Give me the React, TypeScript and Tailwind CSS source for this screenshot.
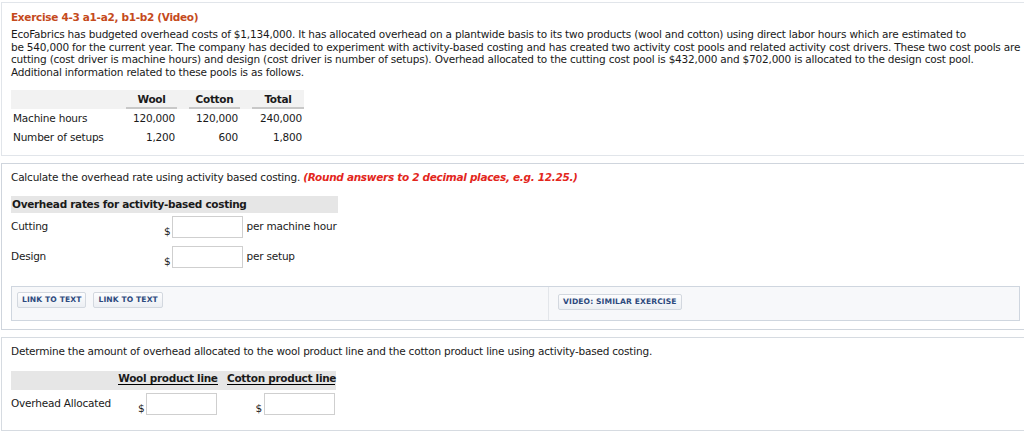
const font = { fontFamily: '"DejaVu Sans", Verdana, sans-serif' };

function LinkButton({ label }: { label: string }) {
  return (
    <button className="rounded-[2px] border border-[#d3d8df] bg-gradient-to-b from-[#fdfdfe] to-[#eceff3] px-[4px] py-[2px] text-[7.6px] font-bold leading-[10px] tracking-[0.1px] text-[#2d4a7e]">
      {label}
    </button>
  );
}

function MoneyInput() {
  return (
    <div className="flex items-end">
      <span className="mr-[2px] pb-[1px] leading-[12px]">$</span>
      <input className="h-[22px] w-[71px] border border-[#cfcfcf] bg-white outline-none" />
    </div>
  );
}

const cell = "pr-[2px] text-right";

export default function App() {
  return (
    <div className="h-[437px] w-[1024px] overflow-hidden bg-white text-[10.5px] tracking-[-0.2px] text-[#1a1a1a]" style={font}>
      {/* problem statement */}
      <div className="ml-[1px] mt-[2px] border-b border-l border-t border-[#e1e5ea] pb-[11px] pl-[9px] pt-[7px]">
        <div className="font-bold leading-[14px] tracking-[-0.3px] text-[#c54a1c]">Exercise 4-3 a1-a2, b1-b2 (Video)</div>
        <p className="mt-[4px] whitespace-nowrap leading-[12.5px]">
          EcoFabrics has budgeted overhead costs of $1,134,000. It has allocated overhead on a plantwide basis to its two products (wool and cotton) using direct labor hours which are estimated to
          <br />
          be 540,000 for the current year. The company has decided to experiment with activity-based costing and has created two activity cost pools and related activity cost drivers. These two cost pools are
          <br />
          cutting (cost driver is machine hours) and design (cost driver is number of setups). Overhead allocated to the cutting cost pool is $432,000 and $702,000 is allocated to the design cost pool.
          <br />
          Additional information related to these pools is as follows.
        </p>
        <div className="mt-[12px] grid w-[293px] grid-cols-[115px_51px_63px_64px] leading-[13px]">
          <div className="bg-[#f2f2f2]"></div>
          <div className="bg-[#f2f2f2] pt-[3px] font-bold tracking-[-0.3px]">
            <div className="border-b-2 border-[#c8c8c8] pb-[1px] text-center">Wool</div>
          </div>
          <div className="bg-[#f2f2f2] pl-[12px] pt-[3px] font-bold tracking-[-0.3px]">
            <div className="border-b-2 border-[#c8c8c8] pb-[1px] text-center">Cotton</div>
          </div>
          <div className="bg-[#f2f2f2] pl-[12px] pt-[3px] font-bold tracking-[-0.3px]">
            <div className="border-b-2 border-[#c8c8c8] pb-[1px] text-center">Total</div>
          </div>

          <div className="pl-[2px] pt-[3px]">Machine hours</div>
          <div className={`${cell} pt-[3px]`}>120,000</div>
          <div className={`${cell} pt-[3px]`}>120,000</div>
          <div className={`${cell} pt-[3px]`}>240,000</div>

          <div className="whitespace-nowrap pl-[2px] pt-[6px]">Number of setups</div>
          <div className={`${cell} pt-[6px]`}>1,200</div>
          <div className={`${cell} pt-[6px]`}>600</div>
          <div className={`${cell} pt-[6px]`}>1,800</div>
        </div>
      </div>

      {/* part a */}
      <div className="ml-[1px] mt-[7px] border-b border-l border-t border-[#cfd5dd] pb-[8px] pl-[9px] pt-[7px]">
        <div className="leading-[13px]">
          Calculate the overhead rate using activity based costing.{" "}
          <span className="font-bold italic tracking-[-0.3px] text-[#e3261c]">(Round answers to 2 decimal places, e.g. 12.25.)</span>
        </div>
        <div className="mt-[12px] w-[327px] bg-[#e6e6e6] px-[1px] py-[2px] font-bold leading-[13px] tracking-[-0.3px]">Overhead rates for activity-based costing</div>
        <div className="mt-[3px] flex items-start">
          <div className="w-[153px] pt-[4px] leading-[13px]">Cutting</div>
          <MoneyInput />
          <div className="pl-[3px] pt-[4px] leading-[13px]">per machine hour</div>
        </div>
        <div className="mt-[8px] flex items-start">
          <div className="w-[153px] pt-[4px] leading-[13px]">Design</div>
          <MoneyInput />
          <div className="pl-[3px] pt-[4px] leading-[13px]">per setup</div>
        </div>
        <div className="mr-[4px] mt-[18px] flex h-[35px] border border-[#cfd6df] bg-[#f7f8fa]">
          <div className="flex w-[537px] items-start gap-[7px] border-r border-[#e3e6ea] pl-[5px] pt-[5px]">
            <LinkButton label="LINK TO TEXT" />
            <LinkButton label="LINK TO TEXT" />
          </div>
          <div className="pl-[9px] pt-[6px]">
            <LinkButton label="VIDEO: SIMILAR EXERCISE" />
          </div>
        </div>
      </div>

      {/* part b */}
      <div className="ml-[1px] mt-[7px] border-b border-l border-t border-[#d6dbe1] pb-[15px] pl-[9px] pt-[7px]">
        <div className="leading-[13px]">
          Determine the amount of overhead allocated to the wool product line and the cotton product line using activity-based costing.
        </div>
        <div className="mt-[13px] flex w-[325px] whitespace-nowrap bg-[#e6e6e6] pb-[5px] pt-[1px] font-bold leading-[12px] tracking-[-0.3px]">
          <div className="w-[107px]"></div>
          <div className="w-[100px] border-b border-black text-center">Wool product line</div>
          <div className="ml-[9px] w-[108px] border-b border-black text-center">Cotton product line</div>
        </div>
        <div className="mt-[3px] flex items-start">
          <div className="w-[127px] pt-[4px] leading-[13px]">Overhead Allocated</div>
          <MoneyInput />
          <div className="ml-[38px]">
            <MoneyInput />
          </div>
        </div>
      </div>
    </div>
  );
}
